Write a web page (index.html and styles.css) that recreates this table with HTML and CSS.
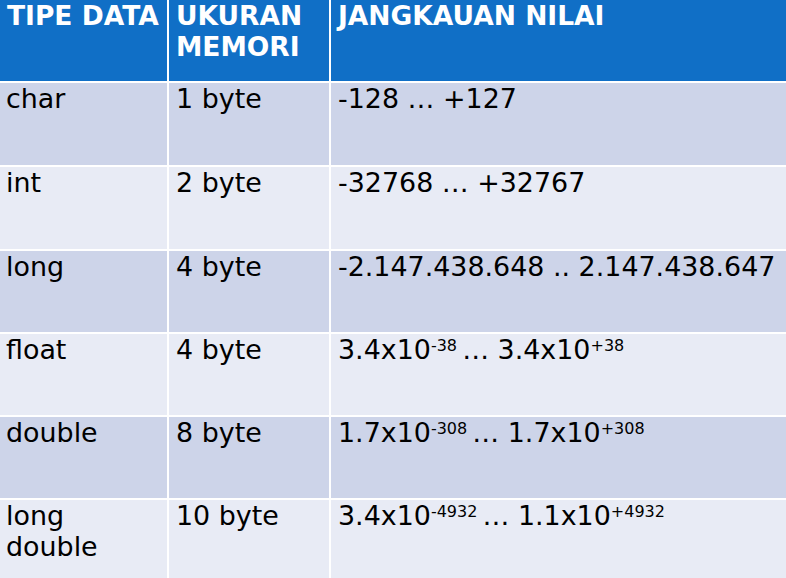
FILE: index.html
```html
<!DOCTYPE html>
<html>
<head>
<meta charset="utf-8">
<link rel="stylesheet" href="styles.css">
</head>
<body>
<div class="table">
  <div class="cell head first">TIPE DATA</div>
  <div class="cell head">UKURAN MEMORI</div>
  <div class="cell head">JANGKAUAN NILAI</div>

  <div class="cell dark first">char</div>
  <div class="cell dark">1 byte</div>
  <div class="cell dark">-128 … +127</div>

  <div class="cell light first">int</div>
  <div class="cell light">2 byte</div>
  <div class="cell light">-32768 … +32767</div>

  <div class="cell dark first">long</div>
  <div class="cell dark">4 byte</div>
  <div class="cell dark">-2.147.438.648 .. 2.147.438.647</div>

  <div class="cell light first">float</div>
  <div class="cell light">4 byte</div>
  <div class="cell light">3.4x10<sup>-38 </sup>… 3.4x10<sup>+38</sup></div>

  <div class="cell dark first">double</div>
  <div class="cell dark">8 byte</div>
  <div class="cell dark">1.7x10<sup>-308 </sup>… 1.7x10<sup>+308</sup></div>

  <div class="cell light first">long double</div>
  <div class="cell light">10 byte</div>
  <div class="cell light">3.4x10<sup>-4932 </sup>… 1.1x10<sup>+4932</sup></div>
</div>
</body>
</html>
```
FILE: styles.css
```css
html, body {
  margin: 0;
  padding: 0;
  background: #ffffff;
}
.table {
  width: 786px;
  height: 578px;
  display: grid;
  grid-template-columns: 167px 160px 1fr;
  grid-template-rows: 81px 82px 82px 81px 81px 81px 1fr;
  column-gap: 2px;
  row-gap: 2px;
  background: #ffffff;
  font-family: "DejaVu Sans", sans-serif;
  font-size: 26.9px;
  line-height: 31px;
  color: #000000;
  overflow: hidden;
}
.cell {
  padding: 0 2px 0 7px;
  overflow: hidden;
}
.cell.first {
  padding-left: 6px;
  padding-right: 10px;
}
.head {
  background: #106FC6;
  color: #ffffff;
  font-weight: bold;
  font-size: 26.5px;
}
.head.first {
  padding-left: 7px;
  padding-right: 0;
}
.dark {
  background: #CDD4E9;
}
.light {
  background: #E8EBF5;
}
sup {
  font-size: 16px;
  line-height: 0;
  vertical-align: 8px;
}
```
